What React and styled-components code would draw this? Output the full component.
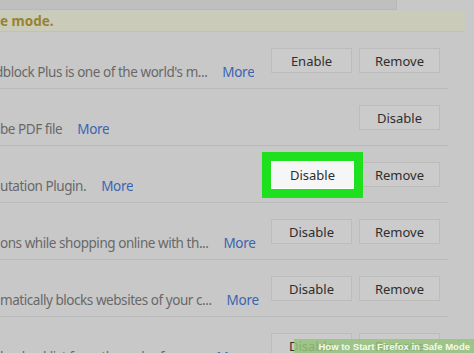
import React from 'react';
import styled, { createGlobalStyle } from 'styled-components';

const GlobalStyle = createGlobalStyle`
  html, body {
    margin: 0;
    padding: 0;
    width: 474px;
    height: 353px;
    overflow: hidden;
    background: #c8c8c8;
    font-family: "Noto Sans", "Open Sans", sans-serif;
  }
`;

const Page = styled.div`
  position: relative;
  width: 474px;
  height: 353px;
  overflow: hidden;
  background: #c8c8c8;
`;

const SearchStrip = styled.div`
  height: 9px;
  width: 396px;
  background: #bfbfbf;
  border-bottom: 1px solid #b8b8b8;
  border-right: 1px solid #b8b8b8;
`;

const Notice = styled.div`
  width: 465px;
  height: 20px;
  margin-top: 1px;
  background: #cbcbba;
  border-bottom: 1px solid #c2c2b2;
  display: flex;
  align-items: center;
  color: #958331;
  font-weight: 700;
  font-size: 13.5px;
  line-height: 20px;
  overflow: hidden;
`;

const List = styled.div`
  width: 448px;
`;

const Row = styled.div`
  height: 56px;
  border-bottom: 1px solid #b9b9b9;
  display: flex;
  justify-content: space-between;
  align-items: flex-start;
  padding-right: 8px;
`;

const DescLine = styled.div`
  margin-top: 30px;
  display: flex;
  align-items: center;
  gap: 15px;
  height: 19px;
  overflow: hidden;
  margin-left: ${p => p.$shift || 0}px;
`;

const Desc = styled.span`
  color: #686868;
  font-size: 13.5px;
  letter-spacing: -0.45px;
  white-space: nowrap;
`;

const More = styled.span`
  color: #3b64b0;
  font-size: 13.5px;
  letter-spacing: -0.3px;
`;

const Buttons = styled.div`
  margin-top: 16px;
  display: flex;
  gap: 7px;
`;

const Button = styled.button`
  box-sizing: border-box;
  width: ${p => (p.$highlight ? 83 : 81)}px;
  height: ${p => (p.$highlight ? 28 : 25)}px;
  margin: ${p => (p.$highlight ? '-1px -2px -2px -2px' : '0')};
  background: ${p => (p.$highlight ? '#f6f6f6' : '#cbcbcb')};
  border: 1px solid ${p => (p.$highlight ? '#ffffff' : '#bcbcbc')};
  box-shadow: ${p => (p.$highlight ? '0 0 0 9px #1fe01f' : 'none')};
  position: relative;
  z-index: ${p => (p.$highlight ? 1 : 0)};
  color: #2e2e2e;
  font-family: "Noto Sans", "Open Sans", sans-serif;
  font-size: 13px;
  padding: 0;
  cursor: pointer;
`;

const Watermark = styled.div`
  position: absolute;
  right: 0;
  bottom: 0;
  width: 180px;
  height: 14px;
  background: rgba(150, 195, 125, 0.85);
  display: flex;
  align-items: center;
  justify-content: flex-end;
  padding-right: 4px;
  box-sizing: border-box;
  color: rgba(255, 255, 255, 0.9);
  font-family: "Liberation Sans", Arial, sans-serif;
  font-weight: 700;
  font-size: 9.5px;
  white-space: nowrap;
`;

const addons = [
  { text: "dblock Plus is one of the world's m...", shift: -5, buttons: ['Enable', 'Remove'] },
  { text: 'be PDF file', buttons: ['Disable'] },
  { text: 'utation Plugin.', buttons: ['Disable', 'Remove'], highlight: true },
  { text: 'ons while shopping online with th...', buttons: ['Disable', 'Remove'] },
  { text: 'matically blocks websites of your c...', buttons: ['Disable', 'Remove'] },
  { text: 'ks checklist from the web of your...', buttons: ['Disable', 'Remove'] },
];

export default function App() {
  return (
    <Page>
      <GlobalStyle />
      <SearchStrip />
      <Notice>e mode.</Notice>
      <List>
        {addons.map((a, i) => (
          <Row key={i}>
            <DescLine $shift={a.shift}>
              <Desc>{a.text}</Desc>
              <More>More</More>
            </DescLine>
            <Buttons>
              {a.buttons.map((b, j) => (
                <Button key={b} $highlight={a.highlight && j === 0}>{b}</Button>
              ))}
            </Buttons>
          </Row>
        ))}
      </List>
      <Watermark>How to Start Firefox in Safe Mode</Watermark>
    </Page>
  );
}
